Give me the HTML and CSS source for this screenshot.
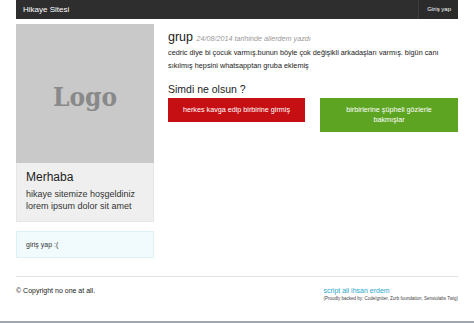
FILE: index.html
```html
<!DOCTYPE html>
<html lang="tr">
<head>
<meta charset="utf-8">
<title>Hikaye Sitesi</title>
<link rel="stylesheet" href="styles.css">
</head>
<body>
<div class="page">
  <nav class="topbar">
    <a class="brand" href="#">Hikaye Sitesi</a>
    <a class="login" href="#">Giriş yap</a>
  </nav>

  <div class="layout">
    <aside class="sidebar">
      <div class="logo">Logo</div>
      <div class="panel">
        <h3>Merhaba</h3>
        <p>hikaye sitemize hoşgeldiniz lorem ipsum dolor sit amet</p>
      </div>
      <div class="info">giriş yap :(</div>
    </aside>

    <main class="content">
      <h2 class="title">grup <small>24/08/2014 tarihinde alierdem yazdı</small></h2>
      <p class="story">cedric diye bi çocuk varmış.bunun böyle çok değişikli arkadaşları varmış. bigün canı sıkılmış hepsini whatsapptan gruba eklemiş</p>
      <h4 class="question">Simdi ne olsun ?</h4>
      <div class="choices">
        <a class="btn alert" href="#">herkes kavga edip birbirine girmiş</a>
        <a class="btn success" href="#">birbirlerine şüpheli gözlerle bakmışlar</a>
      </div>
    </main>
  </div>

  <footer class="footer">
    <p class="copy">© Copyright no one at all.</p>
    <div class="credits">
      <a href="#">script ali ihsan erdem</a>
      <small>(Proudly backed by: CodeIgniter, Zurb foundation, Sensiolabs Twig)</small>
    </div>
  </footer>
</div>
<div class="strip"></div>
</body>
</html>
```

FILE: styles.css
```css
html, body {
  height: 100%;
}
body {
  margin: 0;
  background: #fff;
  font-family: "Liberation Sans", Arial, sans-serif;
  color: #222;
  display: flex;
  flex-direction: column;
}
a { text-decoration: none; }

.page {
  width: 442px;
  margin: 0 auto;
}

.topbar {
  height: 19px;
  background: #2e2e2e;
  display: flex;
  align-items: stretch;
  justify-content: space-between;
}
.brand {
  color: #fff;
  font-size: 8px;
  line-height: 19px;
  padding-left: 7px;
}
.login {
  color: #fff;
  font-size: 6px;
  line-height: 19px;
  padding: 0 7px 0 8px;
  border-left: 1px solid #3d3d3d;
  background: #2b2b2b;
}

.layout {
  display: grid;
  grid-template-columns: 138px 1fr;
  column-gap: 14px;
  padding-top: 5px;
}

.logo {
  height: 139px;
  background: #c9c9c9;
  color: #898989;
  font-family: "DejaVu Serif", serif;
  font-stretch: condensed;
  font-weight: bold;
  font-size: 26px;
  padding-top: 6px;
  box-sizing: border-box;
  display: flex;
  align-items: center;
  justify-content: center;
}

.panel {
  background: #efefef;
  border: 1px solid #e6e6e6;
  border-top: 0;
  padding: 7px 9px 9px;
}
.panel h3 {
  margin: 0 0 3px;
  font-weight: normal;
  font-size: 12px;
  line-height: 15px;
  color: #222;
}
.panel p {
  margin: 0;
  font-size: 9px;
  line-height: 12px;
  color: #333;
}

.info {
  margin-top: 9px;
  background: #f1fafd;
  border: 1px solid #dcf0f6;
  padding: 8px 9px;
  font-size: 7px;
  line-height: 9px;
  color: #333;
}

.content {
  padding-top: 6px;
}
.title {
  margin: 0;
  font-weight: normal;
  font-size: 12.5px;
  line-height: 14px;
  color: #222;
}
.title small {
  font-size: 7.2px;
  font-style: italic;
  color: #999;
}
.story {
  margin: 0;
  font-size: 7.3px;
  line-height: 13px;
  color: #222;
}
.question {
  margin: 10px 0 0;
  font-weight: normal;
  font-size: 10.5px;
  line-height: 14px;
  color: #222;
}
.choices {
  display: grid;
  grid-template-columns: 137px 138px;
  justify-content: space-between;
  align-items: start;
  margin-top: 2px;
}
.btn {
  display: block;
  color: #fff;
  font-size: 7.2px;
  line-height: 10px;
  text-align: center;
  padding: 7px 10px;
}
.alert { background: #c60f13; }
.success { background: #5da423; }

.footer {
  margin-top: 18px;
  border-top: 1px solid #e2e2e2;
  display: flex;
  justify-content: space-between;
  padding-top: 9px;
}
.copy {
  margin: 0;
  font-size: 7px;
  line-height: 9px;
  color: #222;
}
.credits {
  display: flex;
  flex-direction: column;
}
.credits a {
  font-size: 7px;
  line-height: 9px;
  color: #2ba6cb;
}
.credits small {
  font-size: 4.5px;
  line-height: 7px;
  color: #444;
}

.strip {
  margin-top: auto;
  height: 2px;
  background: #9ea7b0;
}
```
